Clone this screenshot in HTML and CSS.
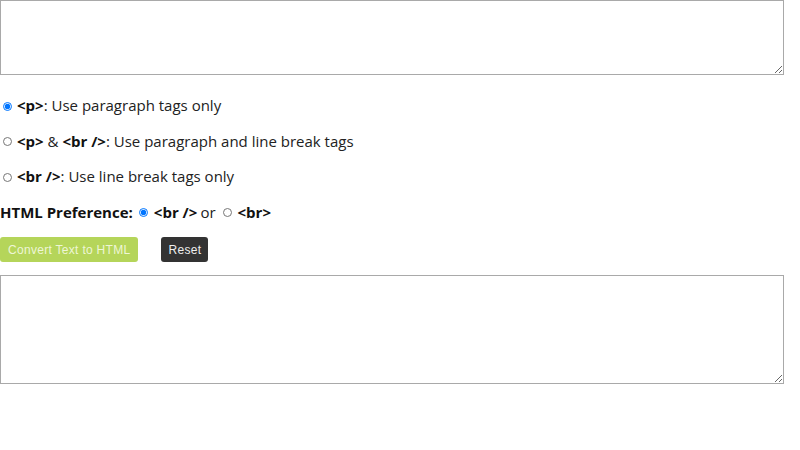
FILE: index.html
```html
<!DOCTYPE html>
<html>
<head>
<meta charset="utf-8">
<link rel="stylesheet" href="styles.css">
</head>
<body>
<textarea class="box box-in"></textarea>
<div class="opts">
  <label class="opt"><input type="radio" name="mode" checked><b>&lt;p&gt;</b>: Use paragraph tags only</label>
  <label class="opt"><input type="radio" name="mode"><b>&lt;p&gt;</b>&nbsp;&amp; <b>&lt;br /&gt;</b>: Use paragraph and line break tags</label>
  <label class="opt"><input type="radio" name="mode"><b>&lt;br /&gt;</b>: Use line break tags only</label>
  <div class="opt"><b class="pref">HTML Preference:</b><label class="choice"><input type="radio" name="br" checked><b>&lt;br /&gt;</b></label><span class="or">or</span><label class="choice"><input type="radio" name="br"><b>&lt;br&gt;</b></label></div>
</div>
<div class="actions">
  <button class="btn btn-go">Convert Text to HTML</button>
  <button class="btn btn-reset">Reset</button>
</div>
<textarea class="box box-out"></textarea>
</body>
</html>
```
FILE: styles.css
```css
html, body { margin: 0; padding: 0; background: #fff; }
body { font-family: "Open Sans", sans-serif; font-size: 15px; color: #222; }
.box {
  display: block;
  box-sizing: border-box;
  width: 784px;
  margin: 0;
  border: 1px solid #a9a9a9;
  padding: 2px;
  resize: vertical;
}
.box-in { height: 75px; }
.box-out { height: 109px; }
.opts { display: flex; flex-direction: column; padding-top: 19px; }
.opt { display: flex; align-items: center; height: 22px; margin-bottom: 13.5px; white-space: pre; }
.opt b { font-weight: 700; color: #111; }
.opt input[type=radio] { width: 9px; height: 9px; margin: 2px 5px 0 3px; }
.pref { margin-right: 3px; }
.choice { display: inline-flex; align-items: center; }
.choice input[type=radio] { margin: 2px 6px 0 3px; }
.or { margin: 0 4px 0 3px; }
.actions { display: flex; gap: 23px; padding: 1px 0 13px; }
.btn {
  font-family: "Liberation Sans", Arial, sans-serif;
  font-size: 12px;
  letter-spacing: 0.3px;
  height: 25px;
  border: none;
  border-radius: 3px;
  color: #fff;
  padding: 0 8px;
}
.btn-go { background: #b5d55a; color: #eef6d6; }
.btn-reset { background: #333; color: #eee; padding: 0 7px; }
```
